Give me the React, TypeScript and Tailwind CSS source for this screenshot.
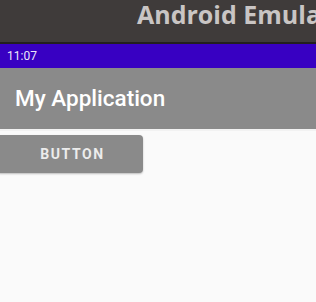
import React from 'react';

export default function App() {
  return (
    <div className="w-[316px] h-[302px] overflow-hidden flex flex-col bg-[#fafafa] font-['Roboto',sans-serif]">
      {/* Emulator window title */}
      <div className="h-[42px] shrink-0 bg-[#3f3b3a] flex items-start pl-[137px] whitespace-nowrap overflow-hidden">
        <span className="text-[25px] font-bold text-[#c9c5c4] leading-[28px] font-['Open_Sans',sans-serif]">Android Emula</span>
      </div>
      <div className="h-[2px] shrink-0 bg-[#231f20]" />

      {/* Status bar */}
      <div className="h-[24px] shrink-0 bg-[#3800c2] flex items-center px-[7px]">
        <span className="text-[12px] text-[#ece8f8] leading-none">11:07</span>
      </div>

      {/* App bar */}
      <div className="h-[61px] shrink-0 bg-[#8a8a8a] flex items-center px-[15px]">
        <span className="text-[22.5px] font-medium text-white leading-none">My Application</span>
      </div>
      <div className="h-[2px] shrink-0 bg-[#f2f2f2]" />

      {/* Content */}
      <div className="flex-1 pt-[4px]">
        <button className="w-[147px] h-[38px] ml-[-4px] rounded-[4px] bg-[#8a8a8a] shadow-[0_1px_2px_rgba(0,0,0,0.25)] flex items-center justify-center pl-[6px]">
          <span className="text-[14px] font-bold tracking-[1.6px] text-[#ececec] leading-none">BUTTON</span>
        </button>
      </div>
    </div>
  );
}
